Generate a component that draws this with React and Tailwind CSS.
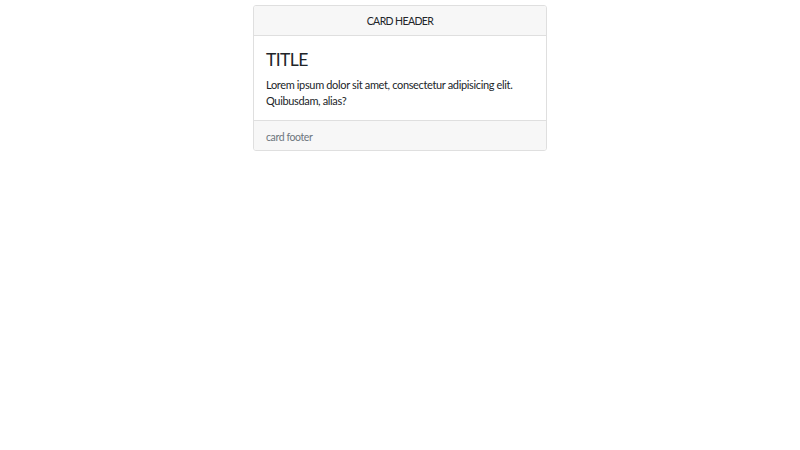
export default function App() {
  return (
    <div className="w-full min-h-[450px] bg-white pt-[5px]" style={{ fontFamily: 'Lato, "Noto Sans", sans-serif' }}>
      <div className="mx-auto w-[294px] border border-[#dfdfdf] rounded-[3px] text-[#212529] overflow-hidden">
        <div className="h-[30px] pt-[9px] bg-[#f7f7f7] border-b border-[#dfdfdf] text-center text-[10.5px] leading-[12px] tracking-[-0.6px]">
          CARD HEADER
        </div>
        <div className="px-[12px] pt-[14px] pb-[12px]">
          <div className="text-[17.5px] leading-[20px] tracking-[-0.6px] mb-[7px]">TITLE</div>
          <p className="text-[11px] leading-[15.5px] tracking-[-0.35px]">
            Lorem ipsum dolor sit amet, consectetur adipisicing elit. Quibusdam, alias?
          </p>
        </div>
        <div className="h-[30px] pt-[10px] bg-[#f7f7f7] border-t border-[#dfdfdf] px-[12px] text-[10.5px] leading-[12.6px] tracking-[-0.4px] text-[#6c757d]">
          card footer
        </div>
      </div>
    </div>
  );
}
